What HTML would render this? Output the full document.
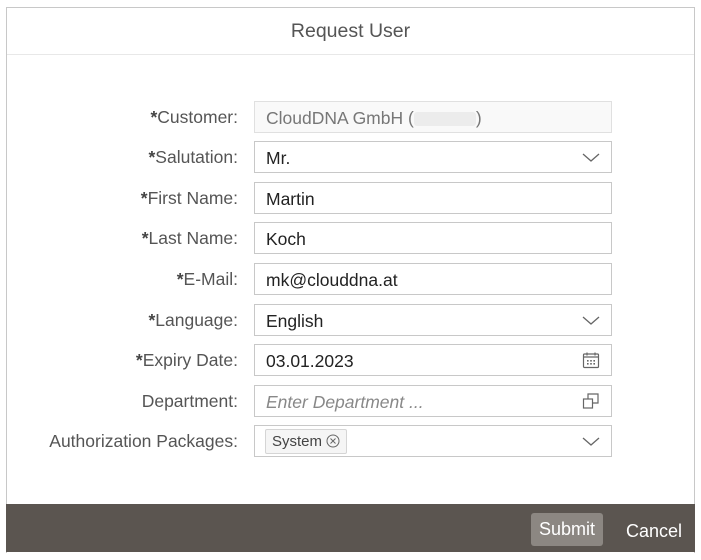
<!DOCTYPE html>
<html><head><meta charset="utf-8"><style>
*{box-sizing:border-box;margin:0;padding:0}
body{width:701px;height:560px;background:#fff;font-family:"Liberation Sans",sans-serif;position:relative;overflow:hidden}
.frame{position:absolute;left:6px;top:7px;width:689px;height:546px;border:1px solid #c8c8c8;border-bottom:none}
.hdr{position:absolute;left:7px;top:8px;width:687px;height:47px;border-bottom:1px solid #e8e8e8;text-align:center;font-size:19.5px;color:#555;line-height:46px}
.lbl{position:absolute;right:463px;font-size:17.5px;color:#555;text-align:right;white-space:nowrap}
.lbl b{font-weight:bold;color:#444}
.fld{position:absolute;left:254px;width:358px;height:32px;border:1px solid #c8c8c8;background:#fff;font-size:17.5px;color:#222;padding-left:11px;line-height:32px}
.ro{background:#f9f9f9;color:#777;border-color:#e0e0e0}
.ph{color:#888;font-style:italic}
.ic{position:absolute;right:11px;top:8px}
.foot{position:absolute;left:6px;top:504px;width:689px;height:48px;background:#5b5550}
.btn{position:absolute;left:531px;top:513px;width:72px;height:33px;background:#8c8782;border-radius:3px;color:#fff;font-size:18px;text-align:center;line-height:33px}
.cancel{position:absolute;left:626px;top:513px;line-height:36px;color:#fff;font-size:18px}
.tok{display:inline-block;border:1px solid #d5d5d5;background:#f5f5f5;border-radius:2px;height:25px;line-height:23px;font-size:15px;color:#444;padding:0 6px;margin-top:3px;margin-left:-1px;vertical-align:top}
</style></head><body>
<div class="frame"></div>
<div class="hdr">Request User</div>

<div class="lbl" style="top:107px"><b>*</b>Customer:</div>
<div class="fld ro" style="top:101px">CloudDNA GmbH (<span style="display:inline-block;width:62px;height:14px;background:#ececec;vertical-align:middle;border-radius:3px"></span>)</div>

<div class="lbl" style="top:147px"><b>*</b>Salutation:</div>
<div class="fld" style="top:141px">Mr.<svg class="ic" width="18" height="14" viewBox="0 0 18 14"><path d="M1 4l8 7 8-7" fill="none" stroke="#666" stroke-width="1.3"/></svg></div>

<div class="lbl" style="top:188px"><b>*</b>First Name:</div>
<div class="fld" style="top:182px">Martin</div>

<div class="lbl" style="top:228px"><b>*</b>Last Name:</div>
<div class="fld" style="top:222px">Koch</div>

<div class="lbl" style="top:269px"><b>*</b>E-Mail:</div>
<div class="fld" style="top:263px">mk@clouddna.at</div>

<div class="lbl" style="top:310px"><b>*</b>Language:</div>
<div class="fld" style="top:304px">English<svg class="ic" width="18" height="14" viewBox="0 0 18 14"><path d="M1 4l8 7 8-7" fill="none" stroke="#666" stroke-width="1.3"/></svg></div>

<div class="lbl" style="top:350px"><b>*</b>Expiry Date:</div>
<div class="fld" style="top:344px">03.01.2023<svg class="ic" style="top:6px" width="18" height="18" viewBox="0 0 18 18"><rect x="1.5" y="3" width="15" height="13.5" rx="1" fill="none" stroke="#666" stroke-width="1.2"/><path d="M1.5 6h15M5 1.5v3M13 1.5v3" stroke="#666" stroke-width="1.2"/><g fill="#666"><rect x="5" y="9" width="1.6" height="1.6"/><rect x="8.2" y="9" width="1.6" height="1.6"/><rect x="11.4" y="9" width="1.6" height="1.6"/><rect x="5" y="12" width="1.6" height="1.6"/><rect x="8.2" y="12" width="1.6" height="1.6"/><rect x="11.4" y="12" width="1.6" height="1.6"/></g></svg></div>

<div class="lbl" style="top:391px">Department:</div>
<div class="fld ph" style="top:385px">Enter Department ...<svg class="ic" style="top:6px" width="18" height="18" viewBox="0 0 18 18"><rect x="1.5" y="7" width="9" height="9" fill="none" stroke="#666" stroke-width="1.2"/><path d="M6 7V2h10v9h-5.5" fill="none" stroke="#666" stroke-width="1.2"/></svg></div>

<div class="lbl" style="top:431px">Authorization Packages:</div>
<div class="fld" style="top:425px;padding-left:11px"><span class="tok">System <svg width="14" height="14" viewBox="0 0 14 14" style="vertical-align:-2px"><circle cx="7" cy="7" r="6" fill="none" stroke="#666" stroke-width="1"/><path d="M4.5 4.5l5 5M9.5 4.5l-5 5" stroke="#666" stroke-width="1"/></svg></span><svg class="ic" width="18" height="14" viewBox="0 0 18 14"><path d="M1 4l8 7 8-7" fill="none" stroke="#666" stroke-width="1.3"/></svg></div>

<div class="foot"></div>
<div class="btn">Submit</div>
<div class="cancel">Cancel</div>
</body></html>
